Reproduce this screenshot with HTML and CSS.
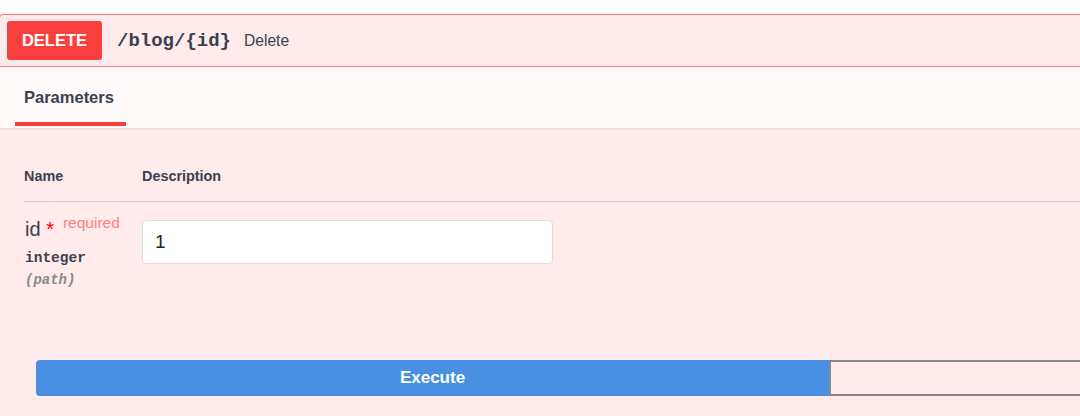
FILE: index.html
```html
<!DOCTYPE html>
<html lang="en">
<head>
<meta charset="utf-8">
<title>DELETE /blog/{id}</title>
<link rel="stylesheet" href="styles.css">
</head>
<body>
<div class="opblock">
  <div class="summary">
    <span class="method">DELETE</span>
    <span class="path">/blog/{id}</span>
    <span class="summary-desc">Delete</span>
  </div>
  <div class="section-header">
    <div class="tab-item">Parameters</div>
  </div>
  <div class="params">
    <div class="params-head">
      <div class="col-name">Name</div>
      <div class="col-desc">Description</div>
    </div>
    <div class="param-row">
      <div class="col-name">
        <div class="param-name">id&nbsp;<span class="star">*</span><span class="required">required</span></div>
        <div class="param-type">integer</div>
        <div class="param-in">(path)</div>
      </div>
      <div class="col-desc">
        <div class="input">1</div>
      </div>
    </div>
  </div>
  <div class="execute-wrapper">
    <div class="btn-group">
      <div class="btn execute">Execute</div>
      <div class="btn clear"></div>
    </div>
  </div>
</div>
</body>
</html>
```

FILE: styles.css
```css
html, body {
  margin: 0;
  padding: 0;
  background: #ffffff;
  overflow: hidden;
  width: 1080px;
  height: 416px;
}

body {
  font-family: "Liberation Sans", Arial, sans-serif;
  color: #3b4151;
  padding-top: 14px;
  box-sizing: border-box;
}

.opblock {
  width: 1660px;
  margin-left: -1px;
  border: 1px solid #fb7d7d;
  border-radius: 4px;
  background: #ffebeb;
  box-shadow: 0 0 3px rgba(0, 0, 0, 0.19);
  height: 420px;
}

.summary {
  display: flex;
  align-items: center;
  padding: 6px 7px;
  height: 39px;
  border-bottom: 1px solid #fb7d7d;
}

.method {
  width: 95px;
  height: 39px;
  display: flex;
  align-items: center;
  justify-content: center;
  background: #f93e3e;
  border-radius: 3px;
  color: #ffffff;
  font-weight: bold;
  font-size: 16.5px;
}

.path {
  margin-left: 15px;
  font-family: "Liberation Mono", "Courier New", monospace;
  font-weight: bold;
  font-size: 19px;
  color: #3b4151;
}

.summary-desc {
  margin-left: 13px;
  font-size: 15.6px;
  color: #3b4151;
}

.section-header {
  display: flex;
  height: 61px;
  padding-left: 15px;
  background: #fffaf9;
  box-shadow: 0 1px 2px rgba(0, 0, 0, 0.1);
}

.tab-item {
  display: flex;
  align-items: center;
  height: 49px;
  padding: 6px 12px 0 9px;
  margin-bottom: 1px;
  border-bottom: 4px solid #f93e3e;
  font-weight: bold;
  font-size: 16.5px;
  color: #3b4151;
}

.params {
  padding-left: 24px;
}

.params-head {
  display: flex;
  padding-top: 38px;
  padding-bottom: 15px;
  border-bottom: 1px solid #d9cacb;
  line-height: 20px;
  font-weight: bold;
  font-size: 14.4px;
}

.col-name {
  width: 118px;
  flex: none;
}

.col-desc {
  flex: 1;
}

.param-row {
  display: flex;
  padding-top: 16px;
}

.param-row .col-desc {
  padding-top: 2px;
}

.param-name {
  padding-left: 1px;
  font-size: 20px;
  line-height: 22px;
  color: #3b4151;
}

.star {
  color: #ff0000;
}

.required {
  font-size: 15.5px;
  line-height: 0;
  vertical-align: 8px;
  padding-left: 9px;
  color: #ff8080;
}

.param-type {
  margin-top: 9px;
  padding-left: 1px;
  font-family: "Liberation Mono", "Courier New", monospace;
  font-weight: bold;
  font-size: 14.5px;
  line-height: 18px;
  color: #3b4151;
}

.param-in {
  margin-top: 4px;
  padding-left: 1px;
  font-family: "Liberation Mono", "Courier New", monospace;
  font-weight: bold;
  font-style: italic;
  font-size: 14px;
  line-height: 18px;
  color: #8a8a8a;
}

.input {
  width: 397px;
  height: 42px;
  box-sizing: content-box;
  padding: 0 0 0 12px;
  display: flex;
  align-items: center;
  background: #ffffff;
  border: 1px solid #dcdcdc;
  border-radius: 4px;
  font-size: 19px;
  color: #222222;
}

.execute-wrapper {
  padding-left: 36px;
  margin-top: 71px;
}

.btn-group {
  display: flex;
}

.btn {
  width: 793px;
  height: 36px;
  box-sizing: border-box;
  display: flex;
  align-items: center;
  justify-content: center;
  font-weight: bold;
  font-size: 17px;
}

.execute {
  background: #4a90e2;
  color: #ffffff;
  border-radius: 4px 0 0 4px;
}

.clear {
  border: 2px solid #888888;
  border-radius: 0 4px 4px 0;
}
```
